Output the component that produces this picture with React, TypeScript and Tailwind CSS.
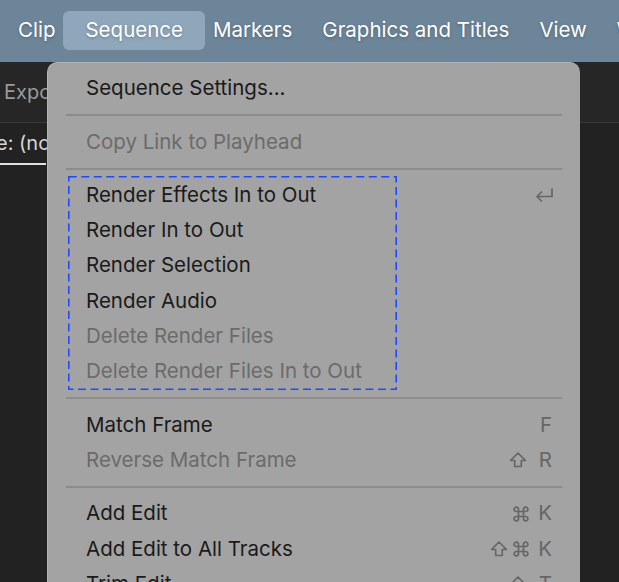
import React from 'react'

type Item = {
  label: string
  disabled?: boolean
  shortcut?: React.ReactNode
}

const font = "font-['Inter','Liberation_Sans',sans-serif]"

function ShiftIcon() {
  return (
    <svg width="18" height="18" viewBox="0 0 18 18" className="mr-[4px]">
      <path
        d="M9 2 L16.5 9.5 H12.3 V15.5 H5.7 V9.5 H1.5 Z"
        fill="none"
        stroke="#666"
        strokeWidth="1.6"
        strokeLinejoin="round"
      />
    </svg>
  )
}

function CmdIcon() {
  return (
    <svg width="18" height="18" viewBox="0 0 18 18">
      <path
        d="M6.5 6.5 H11.5 V11.5 H6.5 Z M6.5 6.5 V4.5 A2.2 2.2 0 1 0 4.5 6.5 H6.5 M11.5 6.5 V4.5 A2.2 2.2 0 1 1 13.5 6.5 H11.5 M6.5 11.5 V13.5 A2.2 2.2 0 1 1 4.5 11.5 H6.5 M11.5 11.5 V13.5 A2.2 2.2 0 1 0 13.5 11.5 H11.5"
        fill="none"
        stroke="#666"
        strokeWidth="1.7"
      />
    </svg>
  )
}

function ReturnIcon() {
  return (
    <svg width="20" height="16" viewBox="0 0 20 16" className="-mr-[2px]">
      <path
        d="M18 2 V9.5 H3 M7.5 5 L3 9.5 L7.5 14"
        fill="none"
        stroke="#666"
        strokeWidth="1.7"
        strokeLinejoin="round"
        strokeLinecap="round"
      />
    </svg>
  )
}

function Keys(props: { shift?: boolean; cmd?: boolean; k: string }) {
  return (
    <span className="flex items-center text-[#666]">
      {props.shift && <ShiftIcon />}
      {props.cmd && <CmdIcon />}
      <span className={props.shift || props.cmd ? 'ml-[8px]' : ''}>{props.k}</span>
    </span>
  )
}

function Row(props: Item) {
  return (
    <div className="flex h-[35.3px] items-center justify-between pl-[38px] pr-[28px]">
      <span className={props.disabled ? 'text-[#6b6b6b]' : 'text-[#1a1a1a]'}>
        {props.label}
      </span>
      {props.shortcut}
    </div>
  )
}

function Separator() {
  return (
    <div className="flex h-[18px] items-center px-[18px]">
      <div className="h-[2px] w-full bg-[#8c8c8c]" />
    </div>
  )
}

export default function App() {
  const menus = ['Clip', 'Sequence', 'Markers', 'Graphics and Titles', 'View', 'Window']

  return (
    <div className={`relative h-[582px] w-[619px] overflow-hidden bg-[#222222] ${font}`}>
      {/* menu bar */}
      <div className="flex h-[62px] items-center bg-[#6c8599] pb-[1px] pl-[3px] text-[20.5px] text-white [text-shadow:0_1px_3px_rgba(0,0,0,0.25)]">
        {menus.map((m) =>
          m == 'Sequence' ? (
            <span
              key={m}
              className="mx-[-7px] flex h-[39px] items-center rounded-[6px] bg-[#8fa7bb] px-[22px]"
            >
              {m}
            </span>
          ) : (
            <span key={m} className="whitespace-nowrap px-[15px]">
              {m}
            </span>
          ),
        )}
      </div>

      {/* app behind the menu */}
      <div className="flex h-[61px] items-center border-b border-[#3a3a3a] bg-[#262626] text-[20px] text-[#9a9a9a]">
        <span className="pl-[4px]">Export</span>
      </div>
      <div className="flex h-[40px] items-center text-[20px] text-[#d6d6d6]">
        <span className="-ml-[4px] whitespace-nowrap">e: (none)</span>
      </div>
      <div className="h-[2px] w-[46px] bg-[#e0e0e0]" />

      {/* dropdown */}
      <div className="absolute left-[47px] top-[62px] h-[540px] w-[533px] rounded-t-[10px] border-l border-t border-[#b3b3b3] bg-[#a3a3a3] pt-[8px] text-[20.5px]">
        <Row label="Sequence Settings..." />
        <Separator />
        <Row label="Copy Link to Playhead" disabled />
        <Separator />
        <div className="relative">
          <Row label="Render Effects In to Out" shortcut={<ReturnIcon />} />
          <Row label="Render In to Out" />
          <Row label="Render Selection" />
          <Row label="Render Audio" />
          <Row label="Delete Render Files" disabled />
          <Row label="Delete Render Files In to Out" disabled />
          <svg
            className="pointer-events-none absolute -top-[2px] left-[20px] h-[214px] w-[329px]"
            viewBox="0 0 329 214"
          >
            <rect
              x="0.8"
              y="0.8"
              width="327.4"
              height="212.4"
              fill="none"
              stroke="#1f4bff"
              strokeWidth="1.6"
              strokeDasharray="8 4.5"
            />
          </svg>
        </div>
        <Separator />
        <Row label="Match Frame" shortcut={<Keys k="F" />} />
        <Row label="Reverse Match Frame" disabled shortcut={<Keys shift k="R" />} />
        <Separator />
        <Row label="Add Edit" shortcut={<Keys cmd k="K" />} />
        <Row label="Add Edit to All Tracks" shortcut={<Keys shift cmd k="K" />} />
        <Row label="Trim Edit" shortcut={<Keys shift k="T" />} />
      </div>
    </div>
  )
}
